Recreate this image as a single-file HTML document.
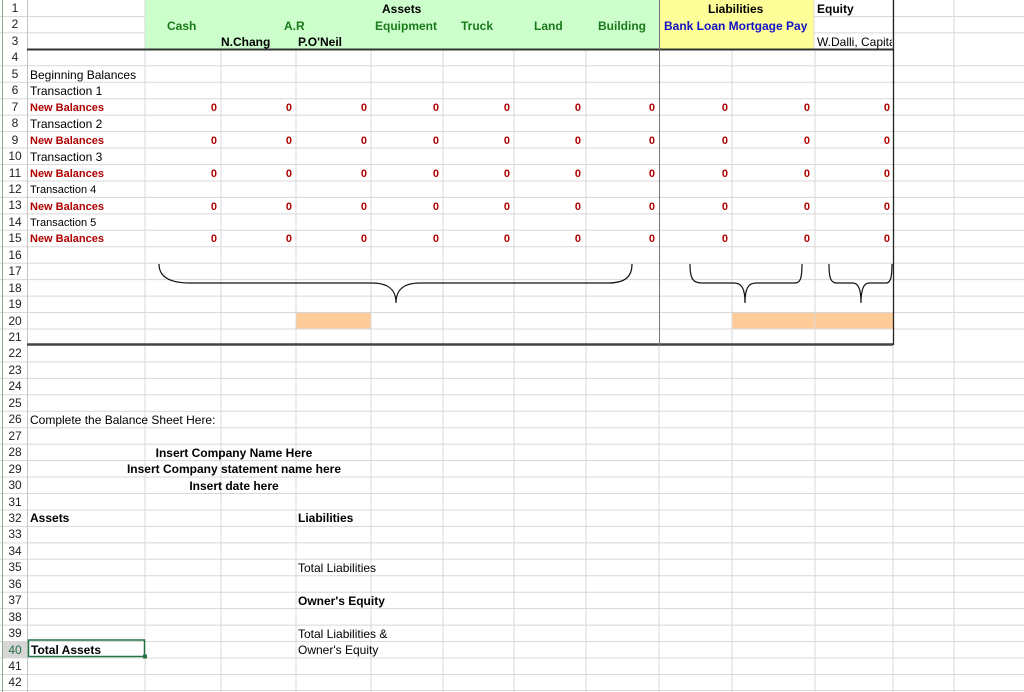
<!DOCTYPE html>
<html><head><meta charset="utf-8"><style>
body{margin:0;width:1024px;height:692px;overflow:hidden;background:#fff;position:relative;font-family:"Liberation Sans",Arial,sans-serif;font-size:12px;color:#000}
.t{position:absolute;white-space:nowrap;line-height:16px;height:16px}
.n{width:24px;left:3px;text-align:center;font-size:12px;color:#222}
.b{font-weight:bold}
.z{font-weight:bold;color:#b00000;font-size:11px;text-align:right;width:40px}
.g{color:#1a7a1a;font-weight:bold}
.nb{color:#b00000;font-weight:bold;font-size:11px}
svg{position:absolute;left:0;top:0}
</style></head><body>
<svg width="1024" height="692">
<rect x="145" y="0" width="514" height="49" fill="#ccffcc"/>
<rect x="659" y="0" width="155" height="49" fill="#ffff99"/>
<rect x="296" y="312.5" width="75" height="16.5" fill="#ffcc99"/>
<rect x="732" y="312.5" width="161" height="16.5" fill="#ffcc99"/>
<rect x="3" y="641.5" width="24" height="16.5" fill="#d6d6d6"/>
<g stroke="#d8d8d8" stroke-width="1">
<path d="M0 16.5H145M0 32.9H145M814 16.5H1024M814 32.9H1024M893 16.5H1024"/>
<path d="M0 65.8H1024M0 82.25H1024M0 98.7H1024M0 115.15H1024M0 131.6H1024M0 148.05H1024M0 164.5H1024M0 180.95H1024M0 197.4H1024M0 213.85H1024M0 230.3H1024M0 246.75H1024M0 263.2H1024M0 279.65H1024M0 296.1H1024M0 312.55H1024M0 329H1024M0 361.9H1024M0 378.35H1024M0 394.8H1024M0 411.25H1024M0 427.7H1024M0 444.15H1024M0 460.6H1024M0 477.05H1024M0 493.5H1024M0 509.95H1024M0 526.4H1024M0 542.85H1024M0 559.3H1024M0 575.75H1024M0 592.2H1024M0 608.65H1024M0 625.1H1024M0 641.55H1024M0 658H1024M0 674.45H1024M0 690.5H1024"/>
<path d="M145 49V692M221 49V692M296 49V692M371 49V692M443 49V692M514 49V692M586 49V692M732 49V692M815 49V692M954 0V692M893 345V692M659 345V692"/>
<path d="M145 0V49M814 0V49M893 0V49"/>
</g>
<path d="M2.5 0V692" stroke="#8faa8f" stroke-width="1"/>
<path d="M27.5 0V692" stroke="#c4c4c4" stroke-width="1"/>
<path d="M27 49.5H893" stroke="#333" stroke-width="2"/>
<path d="M27 344.5H893" stroke="#444" stroke-width="2.5"/>
<path d="M659.5 0V345" stroke="#777" stroke-width="1"/>
<path d="M893.5 0V345" stroke="#222" stroke-width="1.3"/>
<g fill="none" stroke="#111" stroke-width="1.2">
<path d="M159 264C159 276 168 283 190 283H372C389 283 396 290 396 303C396 290 403 283 420 283H608C626 283 632 276 632 264"/>
<path d="M690 264C690 279 693 283 702 283H734C742 283 745 289 745 303C745 289 748 283 756 283H795C800 283 802 279 802 264"/>
<path d="M829 264C829 279 831 283 837 283H853C858 283 861 289 861 303C861 289 864 283 869 283H886C890 283 892 279 892 264"/>
</g>
<rect x="28.5" y="640" width="116" height="16.5" fill="none" stroke="#217346" stroke-width="1.5"/>
<rect x="143" y="654.5" width="4" height="4" fill="#217346"/>
</svg>

<div class="t n" style="top:0">1</div><div class="t n" style="top:16.45px">2</div><div class="t n" style="top:32.9px">3</div><div class="t n" style="top:49.35px">4</div><div class="t n" style="top:65.8px">5</div><div class="t n" style="top:82.25px">6</div><div class="t n" style="top:98.7px">7</div><div class="t n" style="top:115.15px">8</div><div class="t n" style="top:131.6px">9</div><div class="t n" style="top:148.05px">10</div><div class="t n" style="top:164.5px">11</div><div class="t n" style="top:180.95px">12</div><div class="t n" style="top:197.4px">13</div><div class="t n" style="top:213.85px">14</div><div class="t n" style="top:230.3px">15</div><div class="t n" style="top:246.75px">16</div><div class="t n" style="top:263.2px">17</div><div class="t n" style="top:279.65px">18</div><div class="t n" style="top:296.1px">19</div><div class="t n" style="top:312.55px">20</div><div class="t n" style="top:329px">21</div><div class="t n" style="top:345.45px">22</div><div class="t n" style="top:361.9px">23</div><div class="t n" style="top:378.35px">24</div><div class="t n" style="top:394.8px">25</div><div class="t n" style="top:411.25px">26</div><div class="t n" style="top:427.7px">27</div><div class="t n" style="top:444.15px">28</div><div class="t n" style="top:460.6px">29</div><div class="t n" style="top:477.05px">30</div><div class="t n" style="top:493.5px">31</div><div class="t n" style="top:509.95px">32</div><div class="t n" style="top:526.4px">33</div><div class="t n" style="top:542.85px">34</div><div class="t n" style="top:559.3px">35</div><div class="t n" style="top:575.75px">36</div><div class="t n" style="top:592.2px">37</div><div class="t n" style="top:608.65px">38</div><div class="t n" style="top:625.1px">39</div><div class="t n" style="top:641.55px;color:#217346">40</div><div class="t n" style="top:658px">41</div><div class="t n" style="top:674.45px">42</div>

<div class="t b" style="top:1px;left:382px">Assets</div>
<div class="t b" style="top:1px;left:708px">Liabilities</div>
<div class="t b" style="top:1px;left:817px">Equity</div>
<div class="t g" style="top:18px;left:167px">Cash</div>
<div class="t g" style="top:18px;left:284px">A.R</div>
<div class="t g" style="top:18px;left:375px">Equipment</div>
<div class="t g" style="top:18px;left:461px">Truck</div>
<div class="t g" style="top:18px;left:534px">Land</div>
<div class="t g" style="top:18px;left:598px">Building</div>
<div class="t b" style="top:18px;left:664px;color:#1010c8">Bank Loan Mortgage Pay</div>
<div class="t b" style="top:34px;left:221px">N.Chang</div>
<div class="t b" style="top:34px;left:298px">P.O'Neil</div>
<div class="t" style="top:34px;left:817px;width:75px;overflow:hidden">W.Dalli, Capital</div>

<div class="t" style="top:66.5px;left:30px">Beginning Balances</div>
<div class="t" style="top:83px;left:30px">Transaction 1</div>
<div class="t nb" style="top:99.5px;left:30px">New Balances</div>
<div class="t" style="top:116px;left:30px">Transaction 2</div>
<div class="t nb" style="top:132.5px;left:30px">New Balances</div>
<div class="t" style="top:149px;left:30px">Transaction 3</div>
<div class="t nb" style="top:165.5px;left:30px">New Balances</div>
<div class="t" style="top:182px;left:30px;font-size:11px">Transaction 4</div>
<div class="t nb" style="top:198.5px;left:30px">New Balances</div>
<div class="t" style="top:215px;left:30px;font-size:11px">Transaction 5</div>
<div class="t nb" style="top:231px;left:30px">New Balances</div>

<div style="position:absolute;left:0;top:99.5px">
<div class="t z" style="left:177px">0</div><div class="t z" style="left:252px">0</div><div class="t z" style="left:327px">0</div><div class="t z" style="left:399px">0</div><div class="t z" style="left:470px">0</div><div class="t z" style="left:541px">0</div><div class="t z" style="left:615px">0</div><div class="t z" style="left:688px">0</div><div class="t z" style="left:770px">0</div><div class="t z" style="left:850px">0</div></div>
<div style="position:absolute;left:0;top:132.5px">
<div class="t z" style="left:177px">0</div><div class="t z" style="left:252px">0</div><div class="t z" style="left:327px">0</div><div class="t z" style="left:399px">0</div><div class="t z" style="left:470px">0</div><div class="t z" style="left:541px">0</div><div class="t z" style="left:615px">0</div><div class="t z" style="left:688px">0</div><div class="t z" style="left:770px">0</div><div class="t z" style="left:850px">0</div></div>
<div style="position:absolute;left:0;top:165.5px">
<div class="t z" style="left:177px">0</div><div class="t z" style="left:252px">0</div><div class="t z" style="left:327px">0</div><div class="t z" style="left:399px">0</div><div class="t z" style="left:470px">0</div><div class="t z" style="left:541px">0</div><div class="t z" style="left:615px">0</div><div class="t z" style="left:688px">0</div><div class="t z" style="left:770px">0</div><div class="t z" style="left:850px">0</div></div>
<div style="position:absolute;left:0;top:198.5px">
<div class="t z" style="left:177px">0</div><div class="t z" style="left:252px">0</div><div class="t z" style="left:327px">0</div><div class="t z" style="left:399px">0</div><div class="t z" style="left:470px">0</div><div class="t z" style="left:541px">0</div><div class="t z" style="left:615px">0</div><div class="t z" style="left:688px">0</div><div class="t z" style="left:770px">0</div><div class="t z" style="left:850px">0</div></div>
<div style="position:absolute;left:0;top:231px">
<div class="t z" style="left:177px">0</div><div class="t z" style="left:252px">0</div><div class="t z" style="left:327px">0</div><div class="t z" style="left:399px">0</div><div class="t z" style="left:470px">0</div><div class="t z" style="left:541px">0</div><div class="t z" style="left:615px">0</div><div class="t z" style="left:688px">0</div><div class="t z" style="left:770px">0</div><div class="t z" style="left:850px">0</div></div>

<div class="t" style="top:411.5px;left:30px">Complete the Balance Sheet Here:</div>
<div class="t b" style="top:444.5px;left:84px;width:300px;text-align:center">Insert Company Name Here</div>
<div class="t b" style="top:461px;left:84px;width:300px;text-align:center">Insert Company statement name here</div>
<div class="t b" style="top:477.5px;left:84px;width:300px;text-align:center">Insert date here</div>
<div class="t b" style="top:510px;left:30px">Assets</div>
<div class="t b" style="top:510px;left:298px">Liabilities</div>
<div class="t" style="top:559.5px;left:298px">Total Liabilities</div>
<div class="t b" style="top:592.5px;left:298px">Owner's Equity</div>
<div class="t" style="top:625.5px;left:298px">Total Liabilities &amp;</div>
<div class="t b" style="top:641.5px;left:31px">Total Assets</div>
<div class="t" style="top:641.5px;left:298px">Owner's Equity</div>
</body></html>
